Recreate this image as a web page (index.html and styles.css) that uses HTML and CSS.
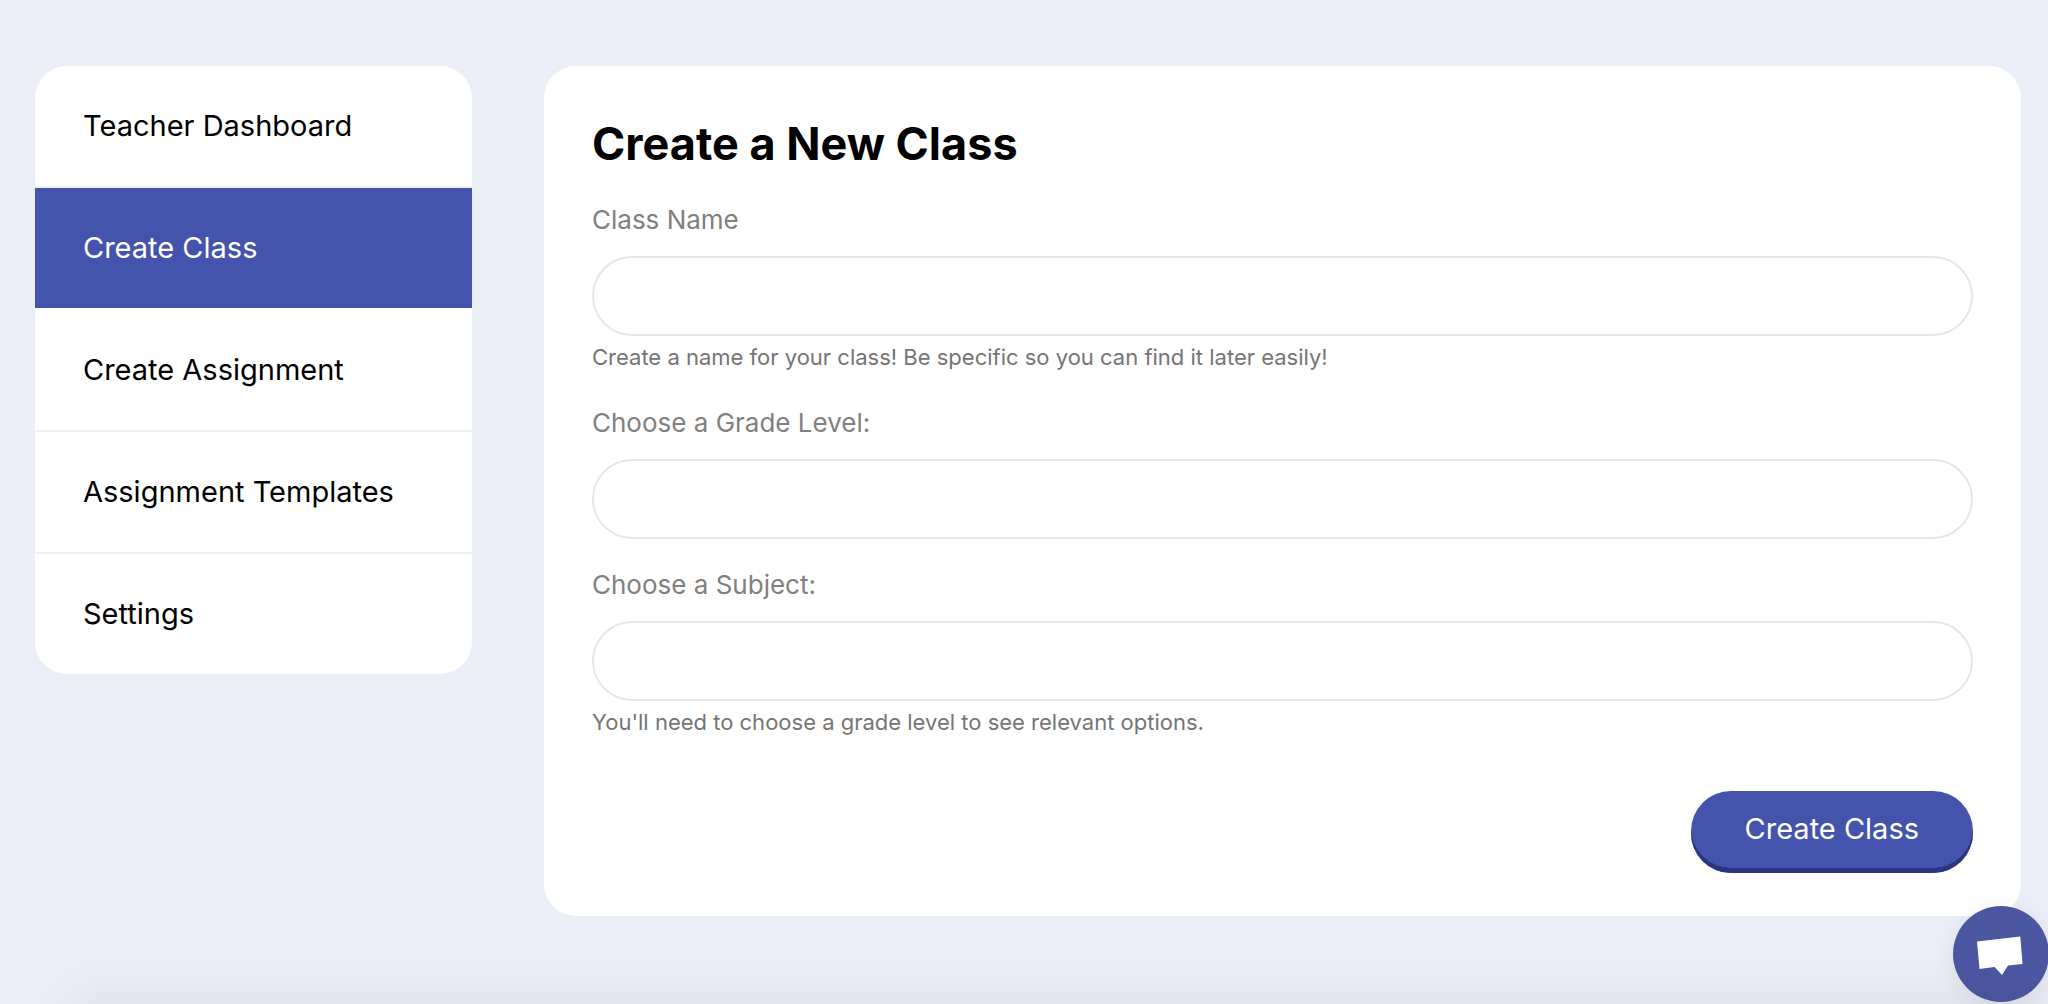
FILE: index.html
```
<!DOCTYPE html>
<html lang="en">
<head>
    <meta charset="UTF-8">
    <meta name="viewport" content="width=device-width, initial-scale=1.0">
    <title>Create Class</title>
    <link rel="stylesheet" href="styles.css">
</head>
<body>
    <div class="page">
        <nav class="sidebar">
            <a class="sidebar-link" href="#">Teacher Dashboard</a>
            <a class="sidebar-link active" href="#">Create Class</a>
            <a class="sidebar-link" href="#">Create Assignment</a>
            <a class="sidebar-link" href="#">Assignment Templates</a>
            <a class="sidebar-link" href="#">Settings</a>
        </nav>

        <main class="panel">
            <h1>Create a New Class</h1>
            <form>
                <div class="field">
                    <label for="class-name">Class Name</label>
                    <input class="control" type="text" id="class-name">
                    <p class="hint">Create a name for your class! Be specific so you can find it later easily!</p>
                </div>
                <div class="field">
                    <label for="grade">Choose a Grade Level:</label>
                    <select class="control" id="grade">
                        <option value=""></option>
                    </select>
                </div>
                <div class="field">
                    <label for="subject">Choose a Subject:</label>
                    <select class="control" id="subject">
                        <option value=""></option>
                    </select>
                    <p class="hint">You'll need to choose a grade level to see relevant options.</p>
                </div>
                <div class="actions">
                    <button class="submit" type="submit">Create Class</button>
                </div>
            </form>
        </main>
    </div>

    <button class="chat" type="button" aria-label="Open chat">
        <svg width="96" height="96" viewBox="0 0 96 96">
            <path d="M24 35.500 L67.300 30.500 L69.500 58 L55 59.500 L49 69 L41.500 61 L26.500 63 Z" fill="#fff"/>
        </svg>
    </button>
    <div class="drawer"></div>
</body>
</html>
```
FILE: styles.css
```
* {
    box-sizing: border-box;
}

body {
    margin: 0;
    background-color: #ebeef7;
    color: #000;
    font-family: 'Inter', sans-serif;
}

.page {
    display: flex;
    align-items: flex-start;
    gap: 72px;
    padding: 66px 27px 66px 35px;
}

.sidebar {
    flex: 0 0 437px;
    background-color: #fff;
    border-radius: 32px;
    overflow: hidden;
}

.sidebar-link {
    display: block;
    padding: 42px 48px;
    border-bottom: 2px solid #f0f0f0;
    color: #000;
    font-size: 29px;
    line-height: 36px;
    text-decoration: none;
}

.sidebar-link:last-child {
    border-bottom: none;
}

.sidebar-link.active {
    background-color: #4453ab;
    border-color: #fff;
    color: #fff;
}

.panel {
    flex: 1;
    min-width: 0;
    padding: 48px 48px 43px;
    background-color: #fff;
    border-radius: 32px;
}

h1 {
    margin: 0 0 30px;
    font-size: 45px;
    font-weight: 700;
    line-height: 60px;
}

.field {
    margin-bottom: 30px;
}

.field label {
    display: block;
    margin-bottom: 20px;
    color: #808080;
    font-size: 26px;
    line-height: 32px;
}

.control {
    display: block;
    width: 100%;
    height: 80px;
    padding: 0 40px;
    background-color: #fff;
    border: 2px solid #e6e6e6;
    border-radius: 40px;
    font-family: inherit;
    font-size: 26px;
    appearance: none;
}

.hint {
    margin: 7px 0 36px;
    color: #757575;
    font-size: 22px;
    line-height: 28px;
}

.actions {
    display: flex;
    justify-content: flex-end;
    margin-top: 55px;
}

.submit {
    padding: 20px 54px 26px;
    background-color: #4453ab;
    border: none;
    border-radius: 40px;
    box-shadow: inset 0 -5px 0 #28357f;
    color: #fff;
    font-family: inherit;
    font-size: 29px;
    line-height: 36px;
    cursor: pointer;
}

.chat {
    position: fixed;
    right: -1px;
    bottom: 2px;
    width: 96px;
    height: 96px;
    padding: 0;
    background-color: #4b57a1;
    border: none;
    border-radius: 50%;
    box-shadow: 0 4px 24px rgba(0, 0, 0, 0.08);
    cursor: pointer;
}

.chat svg {
    display: block;
}

/* closed chat drawer, only its shadow reaches the window */
.drawer {
    position: fixed;
    top: 100%;
    left: 72px;
    right: 0;
    height: 200px;
    box-shadow: 0 0 56px rgba(0, 0, 0, 0.08);
}
```
